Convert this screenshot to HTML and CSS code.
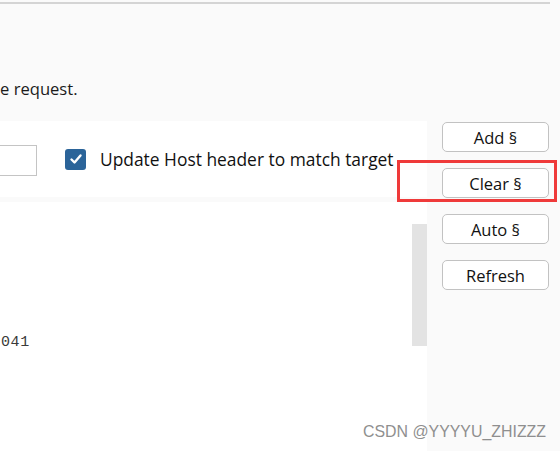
FILE: index.html
```html
<!DOCTYPE html>
<html>
<head>
<meta charset="utf-8">
<link rel="stylesheet" href="styles.css">
</head>
<body>
<div class="page">
  <div class="topline"></div>
  <p class="desc">e request.</p>
  <div class="main">
    <div class="left">
      <div class="options">
        <div class="field"></div>
        <label class="check">
          <span class="box">
            <svg width="14" height="14" viewBox="0 0 14 14"><path d="M2.5 7.5 L5.5 10.5 L11.5 3.5" fill="none" stroke="#fff" stroke-width="2.4" stroke-linecap="round" stroke-linejoin="round"/></svg>
          </span>
          <span class="label">Update Host header to match target</span>
        </label>
      </div>
      <div class="editor">
        <div class="lines">
          <div class="code">041</div>
        </div>
        <div class="scroll"><div class="thumb"></div></div>
      </div>
    </div>
    <div class="right">
      <button class="btn">Add §</button>
      <button class="btn">Clear §</button>
      <button class="btn">Auto §</button>
      <button class="btn">Refresh</button>
    </div>
  </div>
  <div class="highlight"></div>
  <div class="watermark">CSDN @YYYYU_ZHIZZZ</div>
</div>
</body>
</html>
```

FILE: styles.css
```css
html, body {
  margin: 0;
  padding: 0;
  background: #fafafa;
}
.page {
  position: relative;
  width: 560px;
  height: 451px;
  overflow: hidden;
  font-family: "Open Sans", "Noto Sans", sans-serif;
  color: #111;
}
.topline {
  margin-top: 2px;
  width: 550px;
  height: 2px;
  background: #d4d4d4;
}
.desc {
  margin: 0;
  padding-top: 74px;
  height: 43px;
  font-size: 16.6px;
  line-height: 22px;
  color: #1a1a1a;
}
.main {
  display: flex;
  height: 330px;
}
.left {
  width: 427px;
  display: flex;
  flex-direction: column;
}
.options {
  height: 76px;
  background: #fff;
  display: flex;
  align-items: center;
}
.field {
  width: 36px;
  height: 29px;
  border: 1.5px solid #c4c4c4;
  border-left: none;
  background: #fff;
  margin-top: 2px;
}
.check {
  display: flex;
  align-items: center;
  margin-left: 28px;
  margin-top: 0;
}
.box {
  width: 21px;
  height: 21px;
  border-radius: 3px;
  background: #2b6499;
  display: flex;
  align-items: center;
  justify-content: center;
}
.label {
  margin-left: 14px;
  font-size: 17.4px;
  color: #111;
}
.editor {
  margin-top: 5px;
  flex: 1;
  background: #fff;
  display: flex;
}
.lines {
  flex: 1;
  padding-top: 132px;
}
.code {
  font-family: "Liberation Mono", "DejaVu Sans Mono", monospace;
  font-size: 15px;
  line-height: 18px;
  letter-spacing: 0.6px;
  color: #3a3a3a;
  padding-left: 1px;
}
.scroll {
  width: 15px;
  padding-top: 22px;
}
.thumb {
  height: 122px;
  background: #e3e3e3;
}
.right {
  flex: 1;
  display: flex;
  flex-direction: column;
  gap: 16px;
  padding-left: 15px;
  padding-top: 1px;
}
.btn {
  width: 107px;
  height: 30px;
  border: 1.5px solid #c2c2c2;
  border-radius: 5px;
  background: #fff;
  font-family: "Open Sans", "Noto Sans", sans-serif;
  font-size: 16.5px;
  color: #111;
  padding: 0;
}
.highlight {
  position: absolute;
  left: 397px;
  top: 160px;
  width: 154px;
  height: 36px;
  border: 3px solid #ef3a3a;
}
.watermark {
  position: absolute;
  left: 363px;
  top: 423px;
  font-family: "Liberation Sans", Arial, sans-serif;
  font-size: 15.9px;
  color: #8f8f8f;
}
```
